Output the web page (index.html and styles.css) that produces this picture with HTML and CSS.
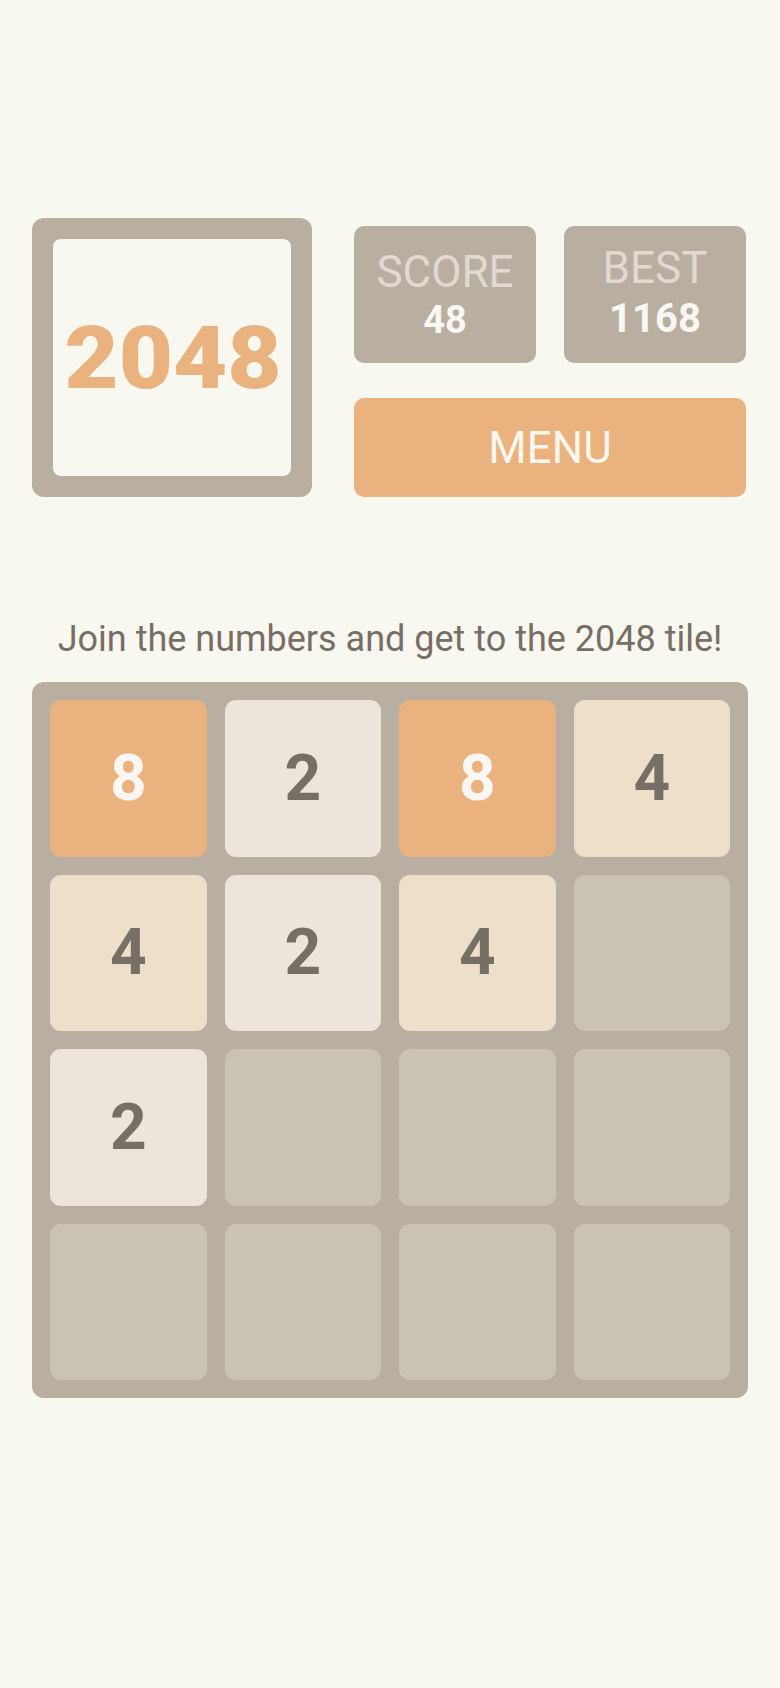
FILE: index.html
```html
<!DOCTYPE html>
<html lang="en">
<head>
<meta charset="utf-8">
<title>2048</title>
<link rel="stylesheet" href="styles.css">
</head>
<body>
<div class="page">
  <div class="top">
    <div class="logo">
      <div class="logo-inner"><span class="logo-text">2048</span></div>
    </div>
    <div class="side">
      <div class="stats">
        <div class="stat">
          <div class="stat-label">SCORE</div>
          <div class="stat-value">48</div>
        </div>
        <div class="stat stat-best">
          <div class="stat-label">BEST</div>
          <div class="stat-value">1168</div>
        </div>
      </div>
      <div class="menu">MENU</div>
    </div>
  </div>
  <p class="hint">Join the numbers and get to the 2048 tile!</p>
  <div class="board">
    <div class="cell t8">8</div>
    <div class="cell t2">2</div>
    <div class="cell t8">8</div>
    <div class="cell t4">4</div>
    <div class="cell t4">4</div>
    <div class="cell t2">2</div>
    <div class="cell t4">4</div>
    <div class="cell"></div>
    <div class="cell t2">2</div>
    <div class="cell"></div>
    <div class="cell"></div>
    <div class="cell"></div>
    <div class="cell"></div>
    <div class="cell"></div>
    <div class="cell"></div>
    <div class="cell"></div>
  </div>
</div>
</body>
</html>
```
FILE: styles.css
```css
* { box-sizing: border-box; }
html, body {
  margin: 0;
  padding: 0;
  background: #f9f8f0;
  font-family: Roboto, "Noto Sans", sans-serif;
}
.page {
  width: 716px;
  margin-left: 32px;
  padding-top: 218px;
}
.top {
  display: flex;
  gap: 42px;
  height: 279px;
}
.logo {
  width: 280px;
  height: 279px;
  padding: 21px;
  border-radius: 12px;
  background: #b8aea1;
  display: flex;
}
.logo-inner {
  flex: 1;
  border-radius: 8px;
  background: #f9f8f0;
  display: flex;
  align-items: center;
  justify-content: center;
}
.logo-text {
  display: inline-block;
  font-size: 88px;
  font-weight: 900;
  line-height: 1;
  color: #eab27e;
  transform: scaleX(1.065);
  margin-left: 3px;
}
.side {
  width: 392px;
  padding-top: 8px;
  display: flex;
  flex-direction: column;
}
.stats {
  display: flex;
  gap: 28px;
  height: 137px;
}
.stat {
  width: 182px;
  height: 137px;
  background: #b8aea1;
  border-radius: 10px;
  display: flex;
  flex-direction: column;
  align-items: center;
  justify-content: center;
  gap: 7px;
  padding-bottom: 1px;
}
.stat-label {
  font-size: 44px;
  line-height: 44px;
  color: #e2d9d1;
}
.stat-value {
  font-size: 38px;
  line-height: 38px;
  font-weight: 700;
  color: #faf7f2;
}
.stat-best {
  gap: 9px;
  padding-bottom: 4px;
}
.stat-best .stat-value {
  font-size: 40px;
  line-height: 40px;
}
.menu {
  margin-top: 35px;
  height: 99px;
  background: #eab27f;
  border-radius: 10px;
  color: #fbf6ee;
  font-size: 44px;
  display: flex;
  align-items: center;
  justify-content: center;
}
.hint {
  margin: 124px 0 0;
  text-align: center;
  font-size: 36px;
  line-height: 36px;
  color: #776e65;
}
.board {
  margin-top: 25px;
  width: 716px;
  height: 716px;
  background: #b8aea1;
  border-radius: 12px;
  padding: 18px;
  display: grid;
  grid-template-columns: repeat(4, 1fr);
  grid-template-rows: repeat(4, 1fr);
  gap: 18px;
}
.cell {
  background: #cac2b5;
  border-radius: 11px;
  display: flex;
  align-items: center;
  justify-content: center;
  font-size: 64px;
  font-weight: 700;
  color: #776e65;
}
.t2 { background: #ede5dc; }
.t4 { background: #ede0ca; }
.t8 { background: #eab27f; color: #faf6f1; }
```
